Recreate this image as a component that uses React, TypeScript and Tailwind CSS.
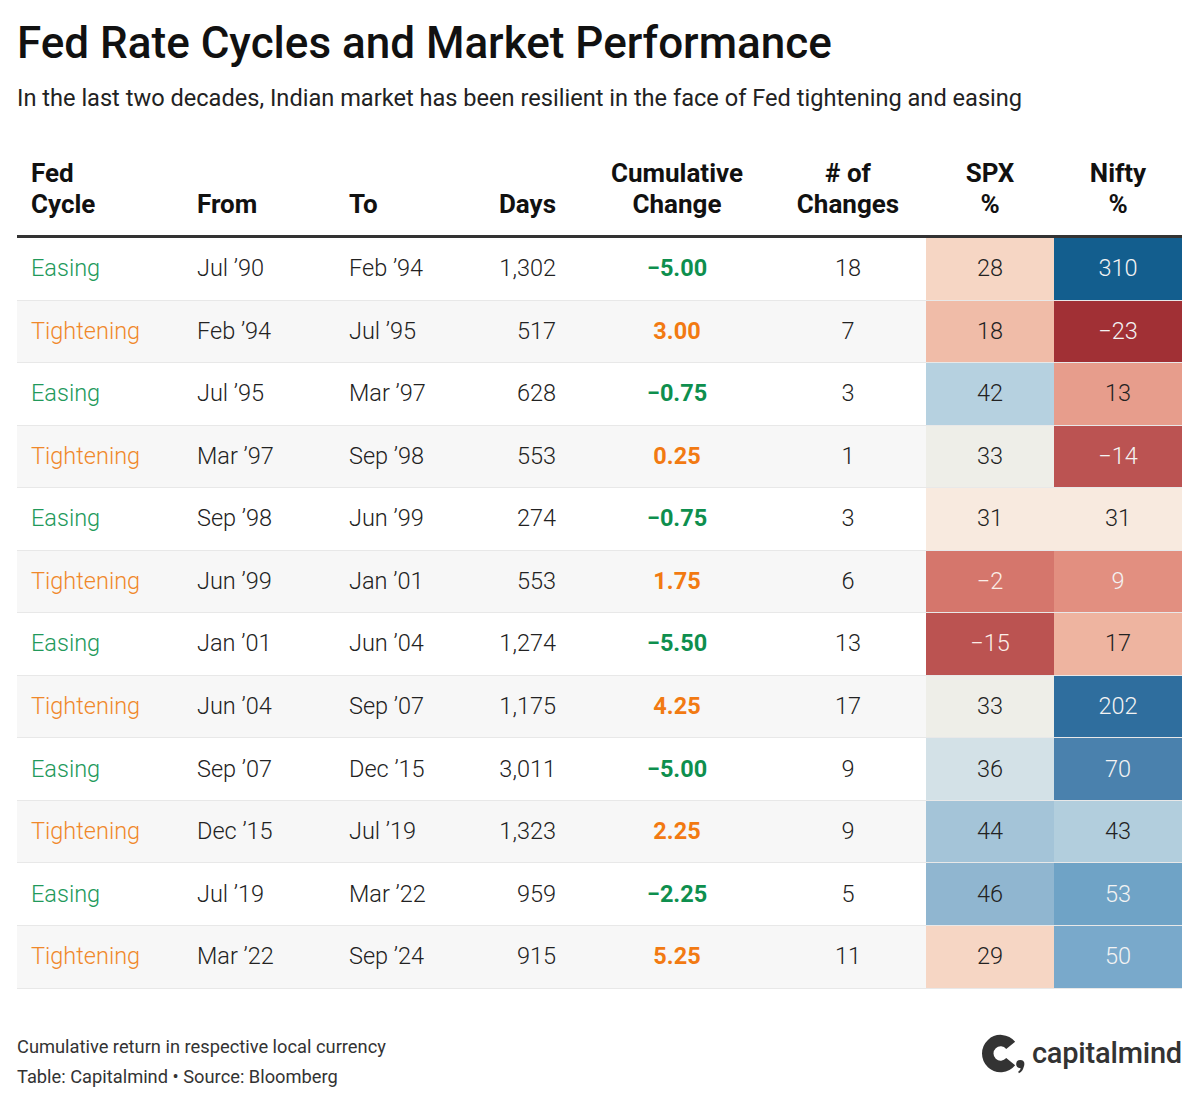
type Row = {
  cycle: "Easing" | "Tightening";
  from: string;
  to: string;
  days: string;
  change: string;
  count: string;
  spx: string;
  spxBg: string;
  spxLight: boolean;
  nifty: string;
  niftyBg: string;
  niftyLight: boolean;
};

const ROWS: Row[] = [
  { cycle: "Easing", from: "Jul ’90", to: "Feb ’94", days: "1,302", change: "−5.00", count: "18", spx: "28", spxBg: "bg-[#f6d6c4]", spxLight: false, nifty: "310", niftyBg: "bg-[#135e8e]", niftyLight: true },
  { cycle: "Tightening", from: "Feb ’94", to: "Jul ’95", days: "517", change: "3.00", count: "7", spx: "18", spxBg: "bg-[#f0bca8]", spxLight: false, nifty: "−23", niftyBg: "bg-[#a13035]", niftyLight: true },
  { cycle: "Easing", from: "Jul ’95", to: "Mar ’97", days: "628", change: "−0.75", count: "3", spx: "42", spxBg: "bg-[#b6d1e0]", spxLight: false, nifty: "13", niftyBg: "bg-[#e79d8c]", niftyLight: false },
  { cycle: "Tightening", from: "Mar ’97", to: "Sep ’98", days: "553", change: "0.25", count: "1", spx: "33", spxBg: "bg-[#eeeee8]", spxLight: false, nifty: "−14", niftyBg: "bg-[#bb5352]", niftyLight: true },
  { cycle: "Easing", from: "Sep ’98", to: "Jun ’99", days: "274", change: "−0.75", count: "3", spx: "31", spxBg: "bg-[#f8eadf]", spxLight: false, nifty: "31", niftyBg: "bg-[#f8eadf]", niftyLight: false },
  { cycle: "Tightening", from: "Jun ’99", to: "Jan ’01", days: "553", change: "1.75", count: "6", spx: "−2", spxBg: "bg-[#d5766c]", spxLight: true, nifty: "9", niftyBg: "bg-[#e28f80]", niftyLight: true },
  { cycle: "Easing", from: "Jan ’01", to: "Jun ’04", days: "1,274", change: "−5.50", count: "13", spx: "−15", spxBg: "bg-[#bb5351]", spxLight: true, nifty: "17", niftyBg: "bg-[#eeb4a0]", niftyLight: false },
  { cycle: "Tightening", from: "Jun ’04", to: "Sep ’07", days: "1,175", change: "4.25", count: "17", spx: "33", spxBg: "bg-[#eeeee8]", spxLight: false, nifty: "202", niftyBg: "bg-[#2f6e9e]", niftyLight: true },
  { cycle: "Easing", from: "Sep ’07", to: "Dec ’15", days: "3,011", change: "−5.00", count: "9", spx: "36", spxBg: "bg-[#d3e1e7]", spxLight: false, nifty: "70", niftyBg: "bg-[#4a81ad]", niftyLight: true },
  { cycle: "Tightening", from: "Dec ’15", to: "Jul ’19", days: "1,323", change: "2.25", count: "9", spx: "44", spxBg: "bg-[#a4c4d8]", spxLight: false, nifty: "43", niftyBg: "bg-[#b2cedd]", niftyLight: false },
  { cycle: "Easing", from: "Jul ’19", to: "Mar ’22", days: "959", change: "−2.25", count: "5", spx: "46", spxBg: "bg-[#90b6d0]", spxLight: false, nifty: "53", niftyBg: "bg-[#6fa3c6]", niftyLight: true },
  { cycle: "Tightening", from: "Mar ’22", to: "Sep ’24", days: "915", change: "5.25", count: "11", spx: "29", spxBg: "bg-[#f6d6c4]", spxLight: false, nifty: "50", niftyBg: "bg-[#79a9cb]", niftyLight: true },
];

const GRID = "grid grid-cols-[166px_152px_125px_110px_214px_142px_128px_128px]";

function Logo() {
  return (
    <div className="flex items-center gap-[6px]">
      <svg width="44" height="40" viewBox="0 0 46 40" aria-hidden>
        {/* heavy C mark */}
        <path d="M30 11 A13.5 13.5 0 1 0 30 28" fill="none" stroke="#333" strokeWidth="12" />
        {/* comma */}
        <circle cx="40" cy="30.5" r="4.3" fill="#333" />
        <path d="M43.8 31.5 C43.6 36 41.7 38.6 38.6 40 L37.8 38.5 C39.7 37.3 40.5 35.6 40.5 33.8 Z" fill="#333" />
      </svg>
      <span className="text-[29px] font-medium tracking-[-0.2px] text-[#333] leading-none">capitalmind</span>
    </div>
  );
}

export default function App() {
  return (
    <div className="w-[1200px] h-[1104px] bg-white px-[17px] pt-[17px] font-['Roboto',sans-serif] text-[#222]">
      {/* Title */}
      <h1 className="text-[44px] font-medium leading-[52px] text-[#111]">
        Fed Rate Cycles and Market Performance
      </h1>
      <p className="mt-[14px] text-[23.6px] leading-[30px] text-[#222]">
        In the last two decades, Indian market has been resilient in the face of Fed tightening and easing
      </p>

      {/* Table */}
      <div className="mt-[45px] w-[1165px]">
        <div className={`${GRID} items-end border-b-[3px] border-[#333] pb-[15px] text-[26px] font-bold leading-[31px] text-[#111]`}>
          <div className="pl-[14px]">Fed<br />Cycle</div>
          <div className="pl-[14px]">From</div>
          <div className="pl-[14px]">To</div>
          <div className="pr-[14px] text-right">Days</div>
          <div className="text-center">Cumulative<br />Change</div>
          <div className="pr-[14px] text-center"># of<br />Changes</div>
          <div className="text-center">SPX<br />%</div>
          <div className="text-center">Nifty<br />%</div>
        </div>

        {ROWS.map((r, i) => {
          const easing = r.cycle === "Easing";
          return (
            <div
              key={i}
              className={`${GRID} h-[62.55px] items-stretch border-b border-[#e8e8e8] text-[23.5px] font-light text-[#222] ${
                i % 2 === 1 ? "bg-[#f7f7f7]" : "bg-white"
              }`}
            >
              <div className={`flex items-center pl-[14px] ${easing ? "text-[#22995a]" : "text-[#f0882a]"}`}>
                {r.cycle}
              </div>
              <div className="flex items-center pl-[14px]">{r.from}</div>
              <div className="flex items-center pl-[14px]">{r.to}</div>
              <div className="flex items-center justify-end pr-[14px]">{r.days}</div>
              <div className={`flex items-center justify-center font-bold ${easing ? "text-[#0e8f4e]" : "text-[#f27a12]"}`}>
                {r.change}
              </div>
              <div className="flex items-center justify-center pr-[14px]">{r.count}</div>
              <div className={`flex items-center justify-center ${r.spxBg} ${r.spxLight ? "text-[#fbeee8]" : "text-[#222]"}`}>
                {r.spx}
              </div>
              <div className={`flex items-center justify-center ${r.niftyBg} ${r.niftyLight ? "text-[#f3f3f3]" : "text-[#222]"}`}>
                {r.nifty}
              </div>
            </div>
          );
        })}
      </div>

      {/* Footer */}
      <div className="mt-[43px] flex w-[1165px] items-start justify-between">
        <div className="text-[18.3px] leading-[30px] text-[#333]">
          <div>Cumulative return in respective local currency</div>
          <div>Table: Capitalmind • Source: Bloomberg</div>
        </div>
        <div className="pt-[2px]">
          <Logo />
        </div>
      </div>
    </div>
  );
}
